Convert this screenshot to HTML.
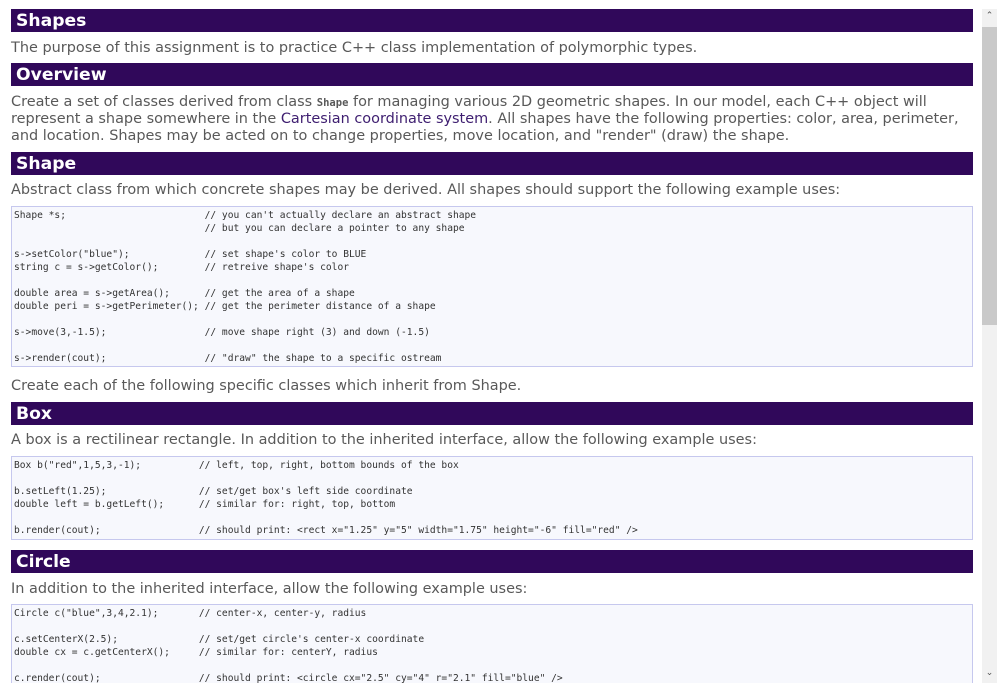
<!DOCTYPE html>
<html><head><style>
body{margin:0;width:1004px;height:697px;overflow:hidden;background:#fff;font-family:"DejaVu Sans","Liberation Sans",sans-serif;position:relative}
#v{position:absolute;left:0;top:0;width:982px;height:683px;overflow:hidden}
.h{position:absolute;left:11px;width:957px;height:23px;background:#30085a;color:#fff;font-weight:bold;font-size:17.2px;line-height:24px;padding-left:5px}
.p{position:absolute;left:11px;width:962px;color:#595959;font-size:14.45px;line-height:17px;white-space:nowrap}
.p a{color:#3e1e70;text-decoration:none}
.p code{font-family:"DejaVu Sans Mono",monospace;font-weight:bold;font-size:10.5px;line-height:0}
pre{position:absolute;left:11px;width:958px;margin:0;background:#f7f8fd;border:1px solid #c6c8ee;padding:2px 0 2px 2px;font-family:"DejaVu Sans Mono","Liberation Mono",monospace;font-size:9.6px;line-height:13px;color:#333;overflow:hidden}
#sb{position:absolute;left:982px;top:9px;width:15px;height:674px;background:#f1f1f1}
#th{position:absolute;left:982px;top:27px;width:15px;height:298px;background:#c9c9c9}
.ar{position:absolute;left:982px;width:15px;text-align:center;font-size:9px;color:#555}
</style></head><body>
<div id="v">
<div class="h" style="top:9px">Shapes</div>
<div class="p" style="top:40px">The purpose of this assignment is to practice C++ class implementation of polymorphic types.</div>
<div class="h" style="top:63px">Overview</div>
<div class="p" style="top:94px">Create a set of classes derived from class <code>Shape</code> for managing various 2D geometric shapes. In our model, each C++ object will<br>represent a shape somewhere in the <a>Cartesian coordinate system</a>. All shapes have the following properties: color, area, perimeter,<br>and location. Shapes may be acted on to change properties, move location, and "render" (draw) the shape.</div>
<div class="h" style="top:152px">Shape</div>
<div class="p" style="top:182px">Abstract class from which concrete shapes may be derived. All shapes should support the following example uses:</div>
<pre style="top:206px;height:155px">Shape *s;                        // you can't actually declare an abstract shape
                                 // but you can declare a pointer to any shape

s->setColor("blue");             // set shape's color to BLUE
string c = s->getColor();        // retreive shape's color

double area = s->getArea();      // get the area of a shape
double peri = s->getPerimeter(); // get the perimeter distance of a shape

s->move(3,-1.5);                 // move shape right (3) and down (-1.5)

s->render(cout);                 // "draw" the shape to a specific ostream</pre>
<div class="p" style="top:378px">Create each of the following specific classes which inherit from Shape.</div>
<div class="h" style="top:402px">Box</div>
<div class="p" style="top:432px">A box is a rectilinear rectangle. In addition to the inherited interface, allow the following example uses:</div>
<pre style="top:456px;height:78px">Box b("red",1,5,3,-1);          // left, top, right, bottom bounds of the box

b.setLeft(1.25);                // set/get box's left side coordinate
double left = b.getLeft();      // similar for: right, top, bottom

b.render(cout);                 // should print: &lt;rect x="1.25" y="5" width="1.75" height="-6" fill="red" /&gt;</pre>
<div class="h" style="top:550px">Circle</div>
<div class="p" style="top:581px">In addition to the inherited interface, allow the following example uses:</div>
<pre style="top:604px;height:90px">Circle c("blue",3,4,2.1);       // center-x, center-y, radius

c.setCenterX(2.5);              // set/get circle's center-x coordinate
double cx = c.getCenterX();     // similar for: centerY, radius

c.render(cout);                 // should print: &lt;circle cx="2.5" cy="4" r="2.1" fill="blue" /&gt;</pre>
</div>
<div id="sb"></div><div id="th"></div>
<div class="ar" style="top:11px">&#8963;</div>
<div class="ar" style="top:668px">&#8964;</div>
</body></html>
